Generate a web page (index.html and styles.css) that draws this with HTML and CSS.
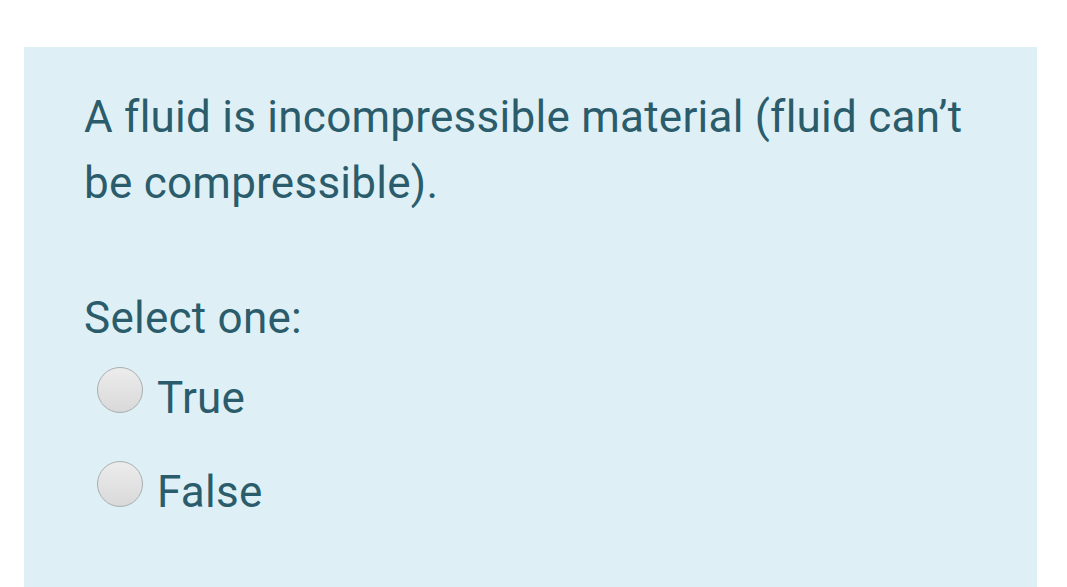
FILE: index.html
```html
<!DOCTYPE html>
<html>
<head>
<meta charset="utf-8">
<link rel="stylesheet" href="styles.css">
</head>
<body>
<div class="card">
  <p class="question">A fluid is incompressible material (fluid can’t be compressible).</p>
  <p class="prompt">Select one:</p>
  <div class="options">
    <label class="option"><span class="radio"></span><span class="label">True</span></label>
    <label class="option"><span class="radio"></span><span class="label">False</span></label>
  </div>
</div>
</body>
</html>
```

FILE: styles.css
```css
html, body {
  margin: 0;
  padding: 0;
  background: #ffffff;
}
body {
  padding: 47px 30px 0 24px;
  height: 587px;
  box-sizing: border-box;
  overflow: hidden;
  font-family: Roboto, "Liberation Sans", sans-serif;
}
.card {
  background: #def0f6;
  width: 1013px;
  height: 540px;
  box-sizing: border-box;
  padding: 37px 60px 0 60px;
  color: #2b5c6b;
  font-size: 44px;
  line-height: 66px;
  letter-spacing: 0.25px;
}
.question {
  margin: 0;
  width: 900px;
}
.prompt {
  margin: 69px 0 0 0;
}
.options {
  margin-top: 14px;
  display: flex;
  flex-direction: column;
  gap: 28px;
  padding-left: 13px;
}
.option {
  display: flex;
  align-items: flex-start;
  gap: 14px;
}
.radio {
  width: 44px;
  height: 44px;
  margin-top: 2px;
  border-radius: 50%;
  border: 1px solid #a9aeb0;
  background: linear-gradient(#ececec, #d9d9d9);
  flex: none;
}
.label {
  display: block;
}
```
